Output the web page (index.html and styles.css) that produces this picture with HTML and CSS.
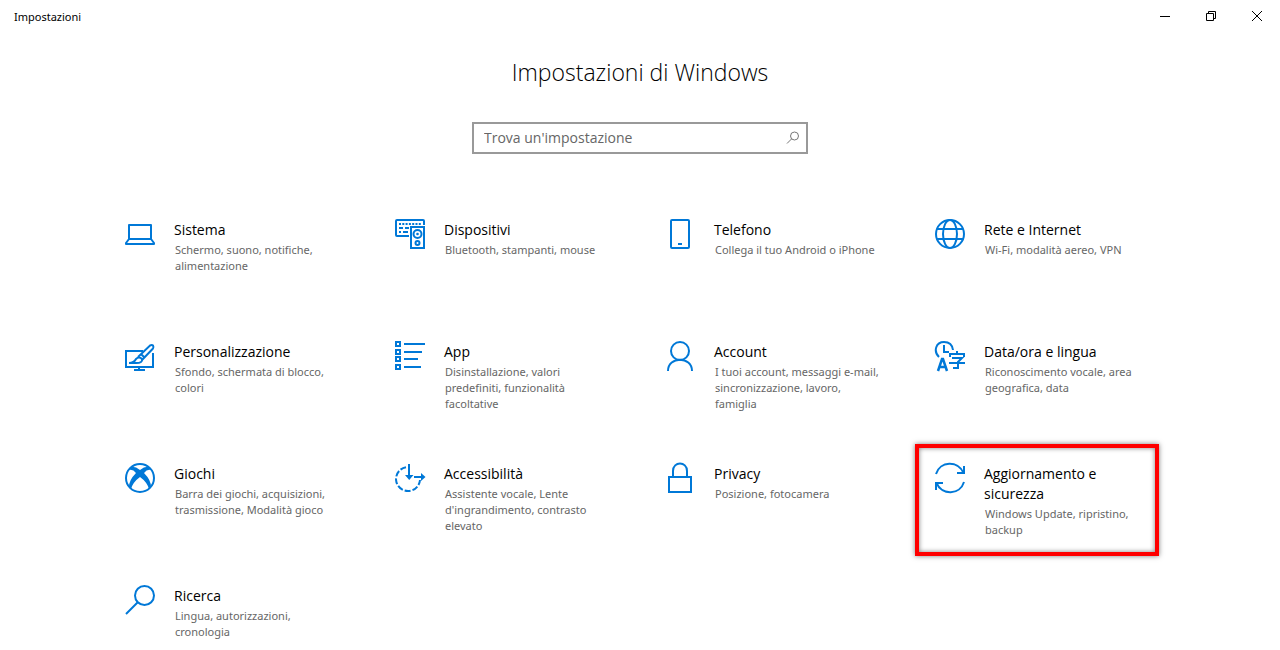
FILE: index.html
```html
<!DOCTYPE html>
<html lang="it">
<head>
<meta charset="utf-8">
<meta name="viewport" content="width=device-width, initial-scale=1">
<title>Impostazioni</title>
<link rel="stylesheet" href="styles.css">
</head>
<body>
<header class="titlebar">
  <span class="app-name">Impostazioni</span>
  <div class="window-controls">
    <button class="window-button" type="button" aria-label="Riduci a icona"><svg width="12" height="12" viewBox="0 0 12 12"><path d="M1 6.500h10"/></svg></button>
    <button class="window-button" type="button" aria-label="Ripristina"><svg width="12" height="12" viewBox="0 0 12 12"><path d="M1.500 3.500h7v7h-7zM3.500 3.500v-2h7v7h-2"/></svg></button>
    <button class="window-button" type="button" aria-label="Chiudi"><svg width="12" height="12" viewBox="0 0 12 12"><path d="M1 1l10 10M11 1L1 11"/></svg></button>
  </div>
</header>
<main>
  <h1 class="page-title">Impostazioni di Windows</h1>
  <form class="search">
    <input class="search-input" type="text" placeholder="Trova un'impostazione" aria-label="Trova un'impostazione">
    <button class="search-button" type="button" aria-label="Cerca"><svg width="14" height="14" viewBox="0 0 14 14"><circle cx="8.500" cy="5" r="4"/><path d="M5.700 7.800L1 12.500"/></svg></button>
  </form>
  <nav class="tiles" aria-label="Categorie">
    <a class="tile" href="#sistema">
      <svg class="icon" viewBox="0 0 32 32"><path d="M5 7h22v14H5zM5 21l-3 4v1h28v-1l-3-4" stroke-linejoin="round"/></svg>
      <span class="text"><span class="name">Sistema</span><span class="desc">Schermo, suono, notifiche,<br>alimentazione</span></span>
    </a>
    <a class="tile" href="#dispositivi">
      <svg class="icon" viewBox="0 0 32 32"><path d="M15 18H3q-1 0-1-1V3q0-1 1-1h26q1 0 1 1v4M17 9h13v21H17z"/><path d="M5 6h22" stroke-dasharray="2 1.300"/><path d="M5 10h4M11 10h4M5 14h2M9 14h5"/><circle cx="23.500" cy="16" r="4"/><circle cx="23.500" cy="16" r="1.300" class="solid"/><circle cx="23.500" cy="25" r="2"/></svg>
      <span class="text"><span class="name">Dispositivi</span><span class="desc">Bluetooth, stampanti, mouse</span></span>
    </a>
    <a class="tile" href="#telefono">
      <svg class="icon" viewBox="0 0 32 32"><rect x="7" y="2" width="18" height="28" rx="1"/><path d="M14 26h4"/></svg>
      <span class="text"><span class="name">Telefono</span><span class="desc">Collega il tuo Android o iPhone</span></span>
    </a>
    <a class="tile" href="#rete">
      <svg class="icon" viewBox="0 0 32 32"><circle cx="16" cy="16" r="14"/><ellipse cx="16" cy="16" rx="7" ry="14"/><path d="M3 11h26M3 21h26"/></svg>
      <span class="text"><span class="name">Rete e Internet</span><span class="desc">Wi-Fi, modalità aereo, VPN</span></span>
    </a>
    <a class="tile" href="#personalizzazione">
      <svg class="icon" viewBox="0 0 32 32"><path d="M19 11H2v16h27V13M15 27v3M10 30h11M5 23q5 0 7-4 3-3 6 0 1 4-6 4z"/><path d="M14 17L26 5.500q2-1 3 0 1 2 0 3L18 20M17 14l4 4"/></svg>
      <span class="text"><span class="name">Personalizzazione</span><span class="desc">Sfondo, schermata di blocco,<br>colori</span></span>
    </a>
    <a class="tile" href="#app">
      <svg class="icon" viewBox="0 0 32 32"><path d="M2 2h4v4H2zM2 10h4v4H2zM2 17h4v4H2zM2 25h4v4H2zM10 4h21M10 12h18M10 19h14M10 27h17"/></svg>
      <span class="text"><span class="name">App</span><span class="desc">Disinstallazione, valori<br>predefiniti, funzionalità<br>facoltative</span></span>
    </a>
    <a class="tile" href="#account">
      <svg class="icon" viewBox="0 0 32 32"><circle cx="16" cy="11" r="9"/><path d="M4 31C4 16 28 16 28 31"/></svg>
      <span class="text"><span class="name">Account</span><span class="desc">I tuoi account, messaggi e-mail,<br>sincronizzazione, lavoro,<br>famiglia</span></span>
    </a>
    <a class="tile" href="#lingua">
      <svg class="icon" viewBox="0 0 32 32"><path d="M5 17C-1 11 2 2 10 2q8 0 9 8M10 5v7h5M16 17v-3h14v3M23 11v3M18 18h10l-4 4v6h-5M15 23h16"/><path d="M4 31l4-12h1l4 12M5 27h7" stroke-width="2.500"/></svg>
      <span class="text"><span class="name">Data/ora e lingua</span><span class="desc">Riconoscimento vocale, area<br>geografica, data</span></span>
    </a>
    <a class="tile" href="#giochi">
      <svg class="icon" viewBox="0 0 32 32"><circle cx="16" cy="16" r="14"/><path class="solid" d="M7 5q4-1 9 3 5-4 9-3l2 3q-4-1-7 3 7 7 7 14l-2 2q-2-7-9-12-7 5-9 12l-2-2q0-7 7-14-3-4-7-3z"/></svg>
      <span class="text"><span class="name">Giochi</span><span class="desc">Barra dei giochi, acquisizioni,<br>trasmissione, Modalità gioco</span></span>
    </a>
    <a class="tile" href="#accessibilita">
      <svg class="icon" viewBox="0 0 32 32"><path d="M12 5.200A12 12 0 1 0 26 18" stroke-dasharray="6 2"/><path d="M15 2v13M20 15h8"/><path class="solid" d="M11 13h8.500l-4.300 5zM27 11l4.500 4-4.500 4z"/></svg>
      <span class="text"><span class="name">Accessibilità</span><span class="desc">Assistente vocale, Lente<br>d'ingrandimento, contrasto<br>elevato</span></span>
    </a>
    <a class="tile" href="#privacy">
      <svg class="icon" viewBox="0 0 32 32"><path d="M5 15h22v15H5zM9 15V9C9-1 23-1 23 9v6"/></svg>
      <span class="text"><span class="name">Privacy</span><span class="desc">Posizione, fotocamera</span></span>
    </a>
    <a class="tile tile-highlighted" href="#aggiornamento">
      <svg class="icon" viewBox="0 0 32 32"><path d="M2 12C6-1 24-2 29.500 11M30 4v7h-7M30 20C26 33 8 34 2.500 21M2 28v-7h7"/></svg>
      <span class="text"><span class="name">Aggiornamento e<br>sicurezza</span><span class="desc">Windows Update, ripristino,<br>backup</span></span>
    </a>
    <a class="tile" href="#ricerca">
      <svg class="icon" viewBox="0 0 32 32"><circle cx="20.500" cy="11.500" r="9.500"/><path d="M14 18L2 30"/></svg>
      <span class="text"><span class="name">Ricerca</span><span class="desc">Lingua, autorizzazioni,<br>cronologia</span></span>
    </a>
  </nav>
</main>
</body>
</html>
```
FILE: styles.css
```css
* { box-sizing: border-box; }
body {
  margin: 0;
  background: #fff;
  color: #000;
  font-family: "Open Sans", "Noto Sans", sans-serif;
  overflow: hidden;
}
svg { fill: none; stroke: currentColor; display: block; }
button { border: 0; padding: 0; background: none; color: inherit; }
.titlebar {
  display: flex;
  justify-content: space-between;
  align-items: center;
  height: 32px;
  padding-left: 14px;
}
.app-name { font-family: "Noto Sans", sans-serif; font-size: 11px; }
.window-controls { display: flex; }
.window-button {
  display: grid;
  place-items: center;
  width: 46px;
  height: 32px;
}
.page-title {
  margin: 24px 0 0;
  text-align: center;
  font-size: 23px;
  font-weight: 300;
  line-height: 32px;
}
.search {
  display: flex;
  align-items: center;
  width: 336px;
  height: 32px;
  margin: 34px auto 46px;
  border: 2px solid #999;
}
.search-input {
  flex: 1;
  min-width: 0;
  height: 28px;
  border: 0;
  outline: 0;
  padding: 0 10px 2px;
  background: none;
  font: inherit;
  font-size: 14px;
}
.search-input::placeholder { color: #666; opacity: 1; }
.search-button {
  display: grid;
  place-items: center;
  width: 26px;
  height: 28px;
  color: #777;
}
.tiles {
  display: grid;
  grid-template-columns: repeat(4, 244px);
  grid-auto-rows: 112px;
  gap: 10px 26px;
  justify-content: center;
  padding-right: 16px;
}
.tile {
  display: flex;
  gap: 18px;
  padding: 18px 0 0 19px;
  color: inherit;
  text-decoration: none;
  white-space: nowrap;
}
.tile-highlighted {
  padding: 14px 0 0 15px;
  border: 4px solid #f00;
  box-shadow: 0 0 5px rgba(0, 0, 0, 0.5), inset 0 0 5px rgba(0, 0, 0, 0.5);
}
.icon {
  flex: none;
  width: 32px;
  height: 32px;
  color: #0078d7;
  stroke-width: 2;
}
.solid { fill: currentColor; stroke: none; }
.text { padding-top: 2px; }
.name, .desc { display: block; }
.name { font-size: 14px; line-height: 20px; }
.desc {
  padding: 2px 0 0 1px;
  font-family: "Noto Sans", sans-serif;
  font-size: 11px;
  line-height: 16px;
  color: #666;
}
```
